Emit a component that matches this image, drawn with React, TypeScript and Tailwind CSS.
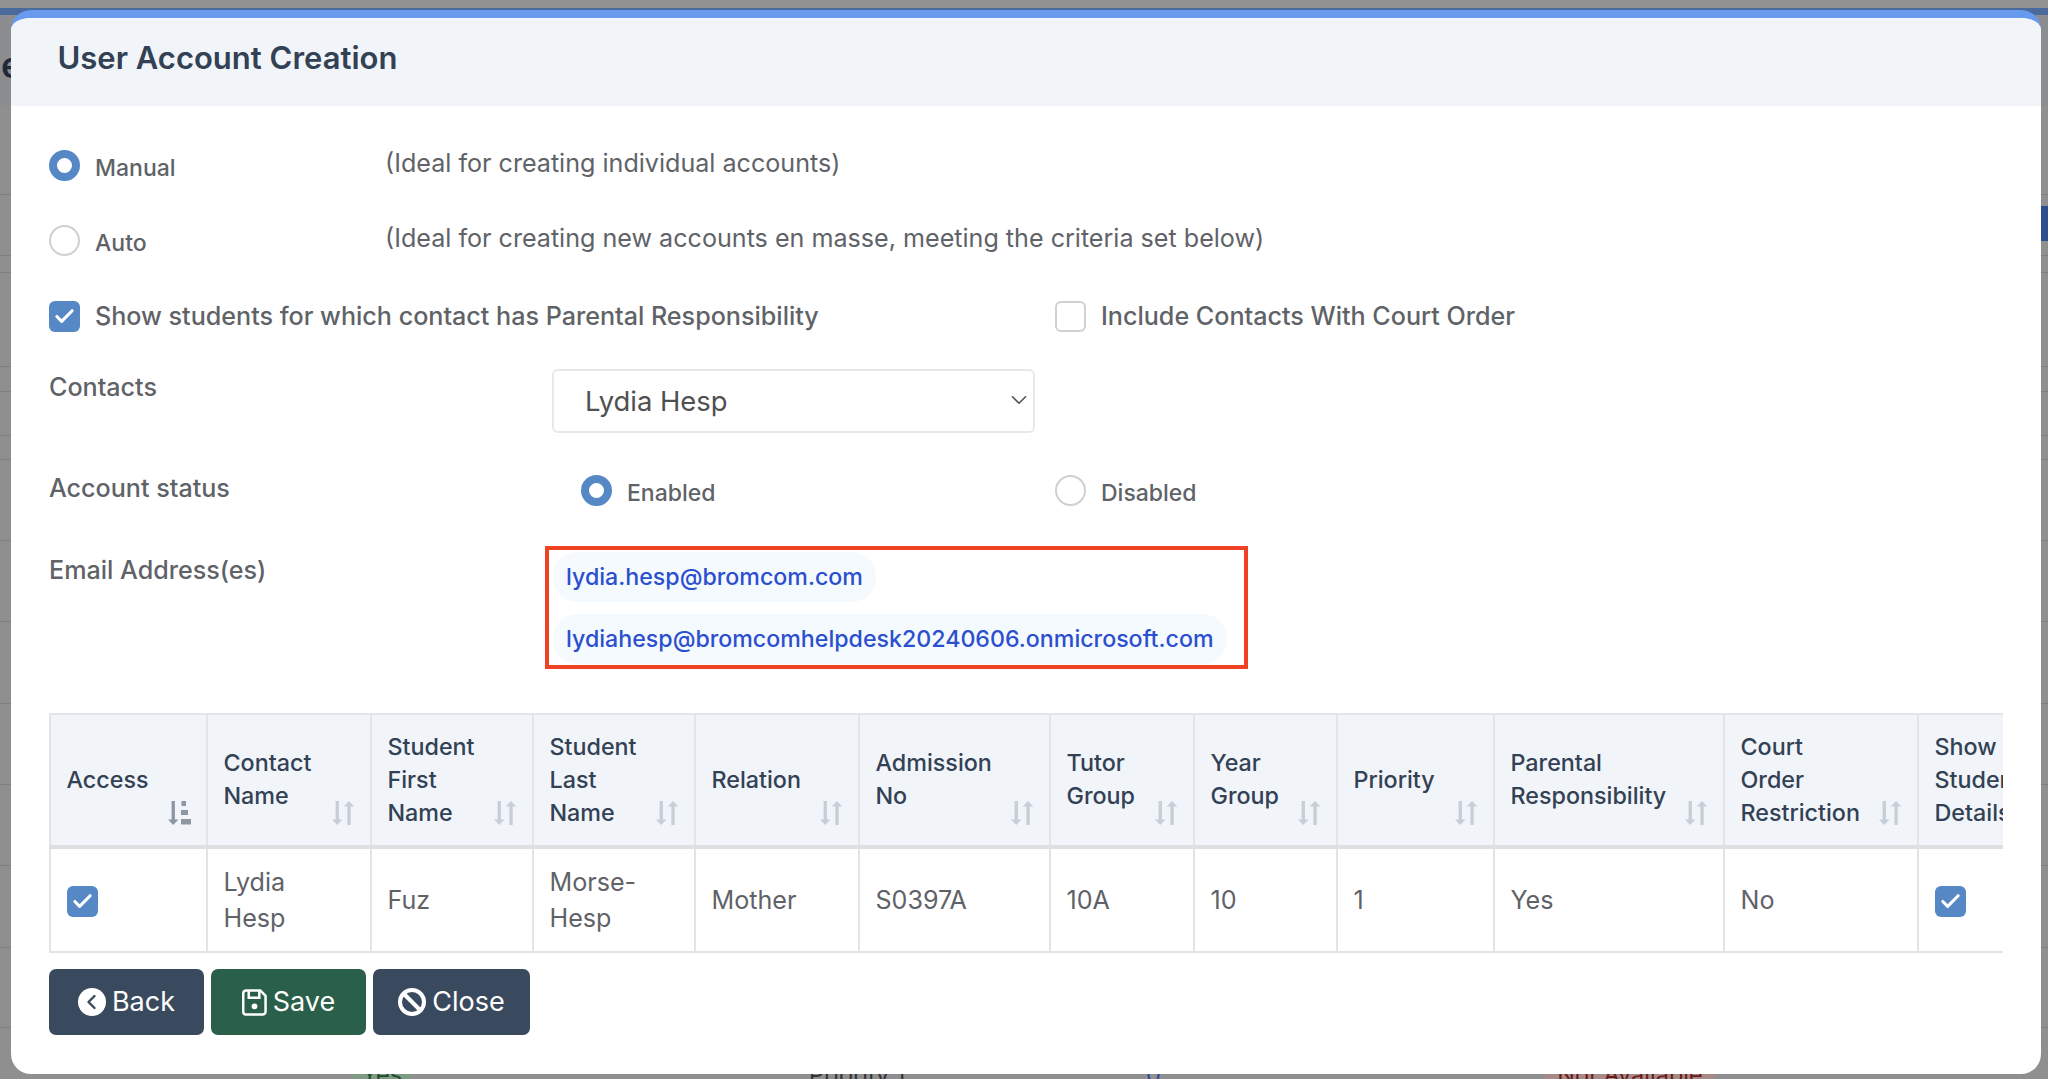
import { Check, ChevronDown } from 'lucide-react'

const font = { fontFamily: 'Inter, "Noto Sans", sans-serif' }

function Radio({ on }: { on?: boolean }) {
  return on ? (
    <span className="block w-[31px] h-[31px] shrink-0 rounded-full bg-white border-[8px] border-[#5588c4]" />
  ) : (
    <span className="block w-[31px] h-[31px] shrink-0 rounded-full bg-white border-2 border-[#d0d0d0]" />
  )
}

function Box({ on }: { on?: boolean }) {
  return on ? (
    <span className="flex items-center justify-center w-[31px] h-[31px] shrink-0 rounded-[6px] bg-[#5588c4]">
      <Check className="w-[23px] h-[23px] text-white" strokeWidth={3.2} />
    </span>
  ) : (
    <span className="block w-[31px] h-[31px] shrink-0 rounded-[6px] bg-white border-2 border-[#d0d0d0]" />
  )
}

function SortBoth() {
  return (
    <svg viewBox="0 0 24 24" className="absolute right-[15px] bottom-[20px] w-[24px] h-[24px] text-[#c6ced8]" fill="currentColor">
      <path d="M4.6 0h3.3v18.5h3.6L6.2 24 1 18.5h3.6z" />
      <path d="M16.4 24h3.3V5.5h3.6L18 0l-5.2 5.5h3.6z" />
    </svg>
  )
}

function SortActive() {
  return (
    <svg viewBox="0 0 24 24" className="absolute right-[15px] bottom-[20px] w-[24px] h-[24px] text-[#8d96a3]" fill="currentColor">
      <path d="M4.6 0h3.3v18.5h3.6L6.2 24 1 18.5h3.6z" />
      <rect x="14.5" y="0" width="4.5" height="5" />
      <rect x="14" y="9" width="7" height="5" />
      <rect x="14" y="18" width="10" height="5.5" />
    </svg>
  )
}

const headers = [
  { w: 157, lines: ['Access'], active: true },
  { w: 164, lines: ['Contact', 'Name'] },
  { w: 162, lines: ['Student', 'First', 'Name'] },
  { w: 162, lines: ['Student', 'Last', 'Name'] },
  { w: 164, lines: ['Relation'] },
  { w: 191, lines: ['Admission', 'No'] },
  { w: 144, lines: ['Tutor', 'Group'] },
  { w: 143, lines: ['Year', 'Group'] },
  { w: 157, lines: ['Priority'] },
  { w: 230, lines: ['Parental', 'Responsibility'] },
  { w: 194, lines: ['Court', 'Order', 'Restriction'] },
  { w: 150, lines: ['Show', 'Student', 'Details'] },
]

const cells = [['Lydia', 'Hesp'], ['Fuz'], ['Morse-', 'Hesp'], ['Mother'], ['S0397A'], ['10A'], ['10'], ['1'], ['Yes'], ['No']]

const lineRows = [194, 255, 272, 366, 391, 435, 459, 540, 621, 703, 784, 865, 947, 1027]

function Backdrop() {
  return (
    <div className="absolute inset-0 bg-[#8f8f8f] overflow-hidden">
      <div className="h-[8px] bg-[#929292]" />
      <div className="h-[7px] bg-[#4a6a9c]" />
      <div className="h-[91px] bg-[#8b8d90] pl-[1px] pt-[32px] text-[36px] leading-[36px] font-semibold text-[#1f2937]">e</div>
      {lineRows.map((y) => (
        <div key={y} className="absolute left-0 right-0 h-[1px] bg-[#7b7e82]" style={{ top: y }} />
      ))}
      <div className="absolute right-0 top-[206px] w-[10px] h-[35px] bg-[#2e4f8f]" />
      <div className="absolute left-0 right-0 top-[1060px] text-[23.5px] leading-[30px] text-[#333]">
        <span className="absolute left-[352px] w-[60px] h-[30px] bg-[#7f9a85] text-center text-[#1e4d2b]">Yes</span>
        <span className="absolute left-[809px]">Priority 1</span>
        <span className="absolute left-[1146px] text-[#2c4a9a]">0</span>
        <span className="absolute left-[1545px] w-[170px] h-[30px] bg-[#a78a88] text-center text-[#6b1a1a]">Not Available</span>
      </div>
    </div>
  )
}

export default function App() {
  return (
    <div className="relative w-[2048px] h-[1079px] overflow-hidden" style={font}>
      <Backdrop />

      <div className="absolute left-[10.5px] top-[9.5px] w-[2030.5px] h-[1064px] bg-white rounded-[20px] border-t-[8px] border-[#689bf0] overflow-hidden">
        <div className="h-[88.5px] bg-[#f1f5f9] pl-[47px] pt-[18px]">
          <h1 className="text-[31px] leading-[44px] font-semibold text-[#334155]">User Account Creation</h1>
        </div>

        <div className="pl-[38.5px] pt-[44px] text-[25.12px] font-medium text-[#5f6368]">
          <div className="flex h-[31px] items-start">
            <div className="flex w-[336px] gap-[15px] text-[23px]">
              <Radio on />
              <span className="leading-[36px]">Manual</span>
            </div>
            <span className="leading-[30px] mt-[-2px] font-normal">(Ideal for creating individual accounts)</span>
          </div>

          <div className="flex h-[31px] items-start mt-[44px]">
            <div className="flex w-[336px] gap-[15px] text-[23px]">
              <Radio />
              <span className="leading-[36px]">Auto</span>
            </div>
            <span className="leading-[30px] mt-[-2px] font-normal">(Ideal for creating new accounts en masse, meeting the criteria set below)</span>
          </div>

          <div className="flex h-[31px] items-center mt-[45px]">
            <div className="flex w-[1006px] items-center gap-[15px]">
              <Box on />
              <span>Show students for which contact has Parental Responsibility</span>
            </div>
            <div className="flex items-center gap-[15px]">
              <Box />
              <span>Include Contacts With Court Order</span>
            </div>
          </div>

          <div className="flex mt-[37px]">
            <span className="w-[503px] leading-[36px]">Contacts</span>
            <div className="relative w-[483px] h-[64px] rounded-[6px] border-2 border-[#e8e8e8] pl-[31px] text-[27.4px] font-normal leading-[60px] text-[#505050]">
              Lydia Hesp
              <ChevronDown className="absolute right-[1px] top-[16px] w-[26px] h-[26px] text-[#555]" strokeWidth={1.5} />
            </div>
          </div>

          <div className="flex mt-[42px] h-[31px]">
            <span className="w-[532px] leading-[36px] mt-[-5px]">Account status</span>
            <div className="flex w-[474px] gap-[15px] text-[23px]">
              <Radio on />
              <span className="leading-[36px]">Enabled</span>
            </div>
            <div className="flex gap-[15px] text-[23px]">
              <Radio />
              <span className="leading-[36px]">Disabled</span>
            </div>
          </div>

          <div className="flex mt-[40px]">
            <span className="w-[496px] leading-[44px] mt-[2px]">Email Address(es)</span>
            <div className="w-[703px] h-[123px] border-[4px] border-[#ef4123] pl-[4px] pt-[2px] text-[#2c4fcf] font-medium text-[23.2px]">
              <div className="w-fit h-[50px] rounded-[24px] bg-[#f5faff] px-[13px] leading-[50px]">lydia.hesp@bromcom.com</div>
              <div className="w-fit h-[50px] rounded-[24px] bg-[#f5faff] px-[13px] leading-[50px] mt-[12px]">lydiahesp@bromcomhelpdesk20240606.onmicrosoft.com</div>
            </div>
          </div>

          <div className="w-[1953.5px] mt-[44px] overflow-hidden">
            <table className="table-fixed border-collapse w-[2018px] border-2 border-[#e2e4e8]">
              <colgroup>
                {headers.map((h) => (
                  <col key={h.lines.join()} style={{ width: h.w }} />
                ))}
              </colgroup>
              <thead>
                <tr className="h-[133px] bg-[#f1f5f9] border-b-[4px] border-[#dedfe1]">
                  {headers.map((h) => (
                    <th key={h.lines.join()} className="relative border-r-2 border-[#e2e4e8] pl-[15.5px] pb-[2px] text-left text-[23.3px] leading-[33px] font-medium text-[#334155]">
                      {h.lines.map((l) => (
                        <div key={l} className="whitespace-nowrap">{l}</div>
                      ))}
                      {h.active ? <SortActive /> : h.lines[0] !== 'Show' && <SortBoth />}
                    </th>
                  ))}
                </tr>
              </thead>
              <tbody>
                <tr className="h-[105px] font-normal">
                  <td className="border-r-2 border-[#e2e4e8] pl-[15.5px]"><div className="mt-[3px]"><Box on /></div></td>
                  {cells.map((c) => (
                    <td key={c.join()} className="border-r-2 border-[#e2e4e8] pl-[15.5px] leading-[36.5px]">
                      {c.map((l) => (
                        <div key={l} className="whitespace-nowrap">{l}</div>
                      ))}
                    </td>
                  ))}
                  <td className="pl-[15.5px]"><div className="mt-[3px]"><Box on /></div></td>
                </tr>
              </tbody>
            </table>
          </div>

          <div className="flex gap-[7px] mt-[16px] text-[27px] font-normal text-white">
            <button className="flex items-center justify-center gap-[6px] w-[155px] h-[66px] rounded-[7px] bg-[#394a5e]">
              <svg viewBox="0 0 28 28" className="w-[28px] h-[28px]">
                <circle cx="14" cy="14" r="14" fill="white" />
                <path d="M16.5 8 10.5 14l6 6" fill="none" stroke="#394a5e" strokeWidth="2.4" strokeLinecap="round" strokeLinejoin="round" />
              </svg>
              Back
            </button>
            <button className="flex items-center justify-center gap-[6px] w-[155px] h-[66px] rounded-[7px] bg-[#2a6049]">
              <svg viewBox="0 0 26 28" className="w-[25px] h-[27px]" fill="none" stroke="white" strokeWidth="2.6">
                <path d="M4 1.5h15l5.5 5.5v16.5a3 3 0 0 1-3 3H4a3 3 0 0 1-2.7-3V4.5A3 3 0 0 1 4 1.5z" />
                <path d="M7 1.5V9h11V1.5" />
                <circle cx="13" cy="18" r="3" fill="white" stroke="none" />
              </svg>
              Save
            </button>
            <button className="flex items-center justify-center gap-[6px] w-[157px] h-[66px] rounded-[7px] bg-[#394a5e]">
              <svg viewBox="0 0 28 28" className="w-[28px] h-[28px]" fill="none" stroke="white" strokeWidth="4">
                <circle cx="14" cy="14" r="12" />
                <path d="M5.5 5.5l17 17" />
              </svg>
              Close
            </button>
          </div>
        </div>
      </div>
    </div>
  )
}
